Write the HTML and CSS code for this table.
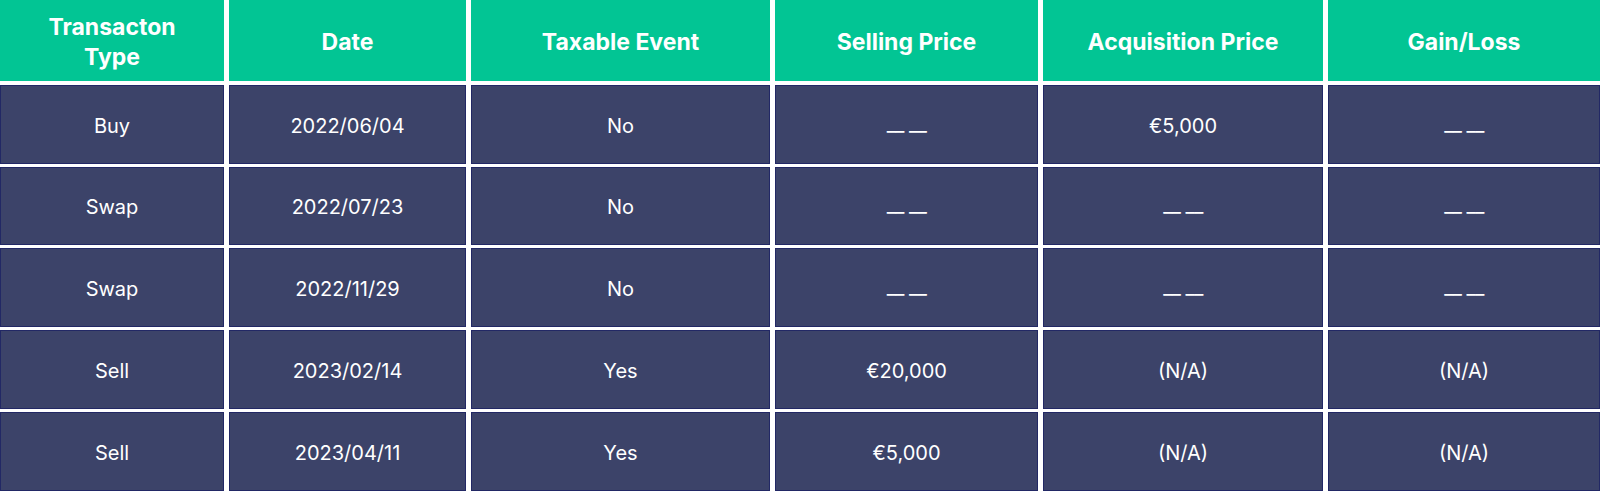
FILE: index.html
```html
<!DOCTYPE html>
<html lang="en">
<head>
<meta charset="utf-8">
<title>Transactions</title>
<link rel="stylesheet" href="styles.css">
</head>
<body>
<div class="table">
  <div class="head">
    <div class="hcell">Transacton<br>Type</div>
    <div class="hcell">Date</div>
    <div class="hcell">Taxable Event</div>
    <div class="hcell">Selling Price</div>
    <div class="hcell">Acquisition Price</div>
    <div class="hcell">Gain/Loss</div>
  </div>
  <div class="body">
    <div class="cell">Buy</div>
    <div class="cell">2022/06/04</div>
    <div class="cell">No</div>
    <div class="cell"><span class="dash">__ __</span></div>
    <div class="cell">€5,000</div>
    <div class="cell"><span class="dash">__ __</span></div>

    <div class="cell">Swap</div>
    <div class="cell">2022/07/23</div>
    <div class="cell">No</div>
    <div class="cell"><span class="dash">__ __</span></div>
    <div class="cell"><span class="dash">__ __</span></div>
    <div class="cell"><span class="dash">__ __</span></div>

    <div class="cell">Swap</div>
    <div class="cell">2022/11/29</div>
    <div class="cell">No</div>
    <div class="cell"><span class="dash">__ __</span></div>
    <div class="cell"><span class="dash">__ __</span></div>
    <div class="cell"><span class="dash">__ __</span></div>

    <div class="cell">Sell</div>
    <div class="cell">2023/02/14</div>
    <div class="cell">Yes</div>
    <div class="cell">€20,000</div>
    <div class="cell">(N/A)</div>
    <div class="cell">(N/A)</div>

    <div class="cell">Sell</div>
    <div class="cell">2023/04/11</div>
    <div class="cell">Yes</div>
    <div class="cell">€5,000</div>
    <div class="cell">(N/A)</div>
    <div class="cell">(N/A)</div>
  </div>
</div>
</body>
</html>
```

FILE: styles.css
```css
html, body {
  margin: 0;
  padding: 0;
  background: #ffffff;
}

body {
  font-family: Inter, "Noto Sans", "Liberation Sans", sans-serif;
  color: #ffffff;
  width: 1600px;
  height: 491px;
  overflow: hidden;
}

.table {
  display: flex;
  flex-direction: column;
  gap: 4px;
}

.head,
.body {
  display: grid;
  grid-template-columns: 224px 237px 299px 263px 280px 272px;
  column-gap: 5px;
}

.head {
  grid-template-rows: 81px;
}

.body {
  grid-template-rows: 79px 78px 79px 79px 79px;
  row-gap: 3px;
}

.hcell {
  background: #02c594;
  display: flex;
  align-items: center;
  justify-content: center;
  text-align: center;
  font-weight: 700;
  font-size: 23px;
  line-height: 30px;
  padding-top: 3px;
  box-sizing: border-box;
}

.cell {
  background: #3c4369;
  border: 1px solid #222865;
  box-sizing: border-box;
  display: flex;
  align-items: center;
  justify-content: center;
  font-size: 20px;
  font-weight: 400;
  padding-top: 2px;
}

.dash {
  letter-spacing: -0.5px;
  position: relative;
  top: -2px;
}
```
